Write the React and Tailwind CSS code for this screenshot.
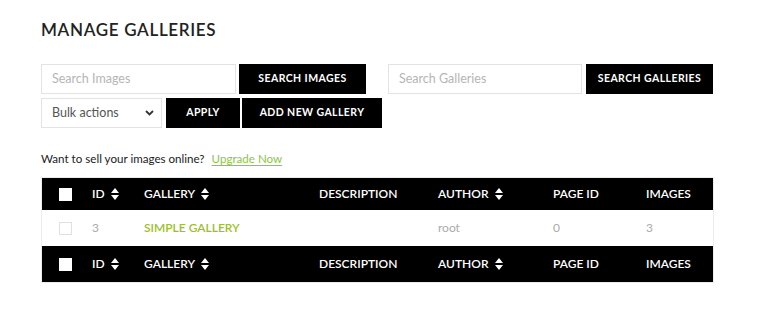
import React from 'react';

const font = { fontFamily: 'Lato, "Open Sans", sans-serif' };

function SortIcon() {
  return (
    <svg width="8" height="12" viewBox="0 0 8 12" className="ml-1.5 inline-block">
      <path d="M4 0 L8 5 H0 Z" fill="white" />
      <path d="M4 12 L8 7 H0 Z" fill="white" />
    </svg>
  );
}

function HeadRow({ h }) {
  return (
    <div className={`grid grid-cols-[50px_52px_175px_119px_115px_93px_1fr] items-center bg-black text-white text-[12px] font-semibold ${h}`}>
      <div className="pl-[17px]">
        <div className="w-[13px] h-[13px] bg-white" />
      </div>
      <div className="flex items-center">ID<SortIcon /></div>
      <div className="flex items-center">GALLERY<SortIcon /></div>
      <div>DESCRIPTION</div>
      <div className="flex items-center">AUTHOR<SortIcon /></div>
      <div>PAGE ID</div>
      <div>IMAGES</div>
    </div>
  );
}

function BlackButton({ children, w }) {
  return (
    <button className={`h-[30px] ${w} bg-black text-white text-[10.5px] font-bold tracking-[0.04em] flex items-center justify-center whitespace-nowrap`}>
      {children}
    </button>
  );
}

export default function App() {
  return (
    <div className="w-[768px] h-[312px] bg-white pl-[41px] pt-[21px]" style={font}>
      <h1 className="text-[17px] font-semibold tracking-[0.04em] text-[#222] leading-[18px]">MANAGE GALLERIES</h1>

      <div className="flex mt-[25px]">
        <div className="w-[195px] h-[30px] border border-[#e3e3e3] flex items-center pl-[10px] text-[12.5px] text-[#b5b5b5]">Search Images</div>
        <div className="ml-[3px]"><BlackButton w="w-[127px]">SEARCH IMAGES</BlackButton></div>
        <div className="ml-[22px] w-[194px] h-[30px] border border-[#e3e3e3] flex items-center pl-[10px] text-[12.5px] text-[#b5b5b5]">Search Galleries</div>
        <div className="ml-[4px]"><BlackButton w="w-[127px]">SEARCH GALLERIES</BlackButton></div>
      </div>

      <div className="flex mt-[4px]">
        <div className="w-[121px] h-[30px] border border-[#e3e3e3] flex items-center justify-between pl-[10px] pr-[7px] text-[12.5px] text-[#555]">
          <span>Bulk actions</span>
          <svg width="9" height="6" viewBox="0 0 9 6"><path d="M1 1 L4.5 4.5 L8 1" stroke="#333" strokeWidth="1.8" fill="none" /></svg>
        </div>
        <div className="ml-[4px]"><BlackButton w="w-[74px]">APPLY</BlackButton></div>
        <div className="ml-[2px]"><BlackButton w="w-[140px]">ADD NEW GALLERY</BlackButton></div>
      </div>

      <div className="mt-[22px] text-[11.6px] text-[#222] flex items-center">
        <span>Want to sell your images online?</span>
        <span className="ml-[7px] text-[#8cc63f] underline underline-offset-2">Upgrade Now</span>
      </div>

      <div className="mt-[10px] w-[673px] border border-[#ececec]">
        <HeadRow h="h-[32px]" />
        <div className="grid grid-cols-[50px_52px_175px_119px_115px_93px_1fr] items-center h-[36px] text-[12px] text-[#aaa] bg-white">
          <div className="pl-[17px]">
            <div className="w-[13px] h-[13px] border border-[#e0e0e0] bg-white" />
          </div>
          <div>3</div>
          <div className="text-[#9cbf2b] font-semibold">SIMPLE GALLERY</div>
          <div></div>
          <div>root</div>
          <div>0</div>
          <div>3</div>
        </div>
        <HeadRow h="h-[36px]" />
      </div>
    </div>
  );
}
